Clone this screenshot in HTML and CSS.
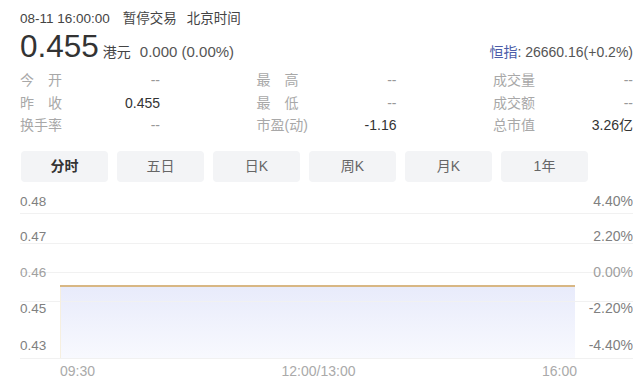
FILE: index.html
```html
<!DOCTYPE html>
<html>
<head>
  <meta charset="utf-8">
  <link rel="stylesheet" href="styles.css">
</head>
<body>
<div class="quote">
  <div class="time">08-11 16:00:00<span class="state">暂停交易</span><span class="zone">北京时间</span></div>

  <div class="price-row">
    <div class="price">
      <span class="last">0.455</span>
      <span class="cur">港元</span>
      <span class="chg">0.000 (0.00%)</span>
    </div>
    <div class="index"><span class="index-name">恒指</span>: 26660.16(+0.2%)</div>
  </div>

  <div class="stats">
    <div class="stat"><span class="label spread">今 开</span><span class="value dim">--</span></div>
    <div class="stat"><span class="label spread">最 高</span><span class="value dim">--</span></div>
    <div class="stat"><span class="label">成交量</span><span class="value dim">--</span></div>
    <div class="stat"><span class="label spread">昨 收</span><span class="value">0.455</span></div>
    <div class="stat"><span class="label spread">最 低</span><span class="value dim">--</span></div>
    <div class="stat"><span class="label">成交额</span><span class="value dim">--</span></div>
    <div class="stat"><span class="label">换手率</span><span class="value dim">--</span></div>
    <div class="stat"><span class="label">市盈(动)</span><span class="value">-1.16</span></div>
    <div class="stat"><span class="label">总市值</span><span class="value">3.26亿</span></div>
  </div>

  <div class="tabs">
    <div class="tab active">分时</div>
    <div class="tab">五日</div>
    <div class="tab">日K</div>
    <div class="tab">周K</div>
    <div class="tab">月K</div>
    <div class="tab">1年</div>
  </div>

  <!-- 分时图 -->
  <svg class="chart" width="613" height="199" viewBox="0 0 613 199">
    <defs>
      <linearGradient id="area" x1="0" y1="0" x2="0" y2="1">
        <stop offset="0" stop-color="#e8ebfb"/>
        <stop offset="1" stop-color="#f8f9fe"/>
      </linearGradient>
    </defs>
    <rect x="40" y="105" width="515" height="71" fill="url(#area)"/>
    <line class="grid" x1="0" y1="31.5" x2="613" y2="31.5"/>
    <line class="grid" x1="0" y1="61.5" x2="613" y2="61.5"/>
    <line class="grid" x1="0" y1="90.5" x2="613" y2="90.5"/>
    <line class="grid" x1="0" y1="119.5" x2="613" y2="119.5"/>
    <line class="grid" x1="0" y1="176.5" x2="613" y2="176.5"/>
    <line x1="40.5" y1="105" x2="40.5" y2="176" stroke="#f6efdf" stroke-width="1"/>
    <line x1="40" y1="104" x2="555" y2="104" stroke="#d8b784" stroke-width="2"/>

    <text class="axis" x="0" y="23.5">0.48</text>
    <text class="axis" x="0" y="58.5">0.47</text>
    <text class="axis faded" x="0" y="94.5">0.46</text>
    <text class="axis" x="0" y="130.5">0.45</text>
    <text class="axis" x="0" y="167.5">0.43</text>

    <text class="axis right" x="613" y="23.5">4.40%</text>
    <text class="axis right" x="613" y="58.5">2.20%</text>
    <text class="axis right faded" x="613" y="94.5">0.00%</text>
    <text class="axis right" x="613" y="130.5">-2.20%</text>
    <text class="axis right" x="613" y="167.5">-4.40%</text>

    <text class="time-axis" x="40" y="194">09:30</text>
    <text class="time-axis" x="298.5" y="194" text-anchor="middle">12:00/13:00</text>
    <text class="time-axis" x="557" y="194" text-anchor="end">16:00</text>
  </svg>
</div>
</body>
</html>
```

FILE: styles.css
```css
body {
  margin: 0;
  background-color: #ffffff;
  font-family: "Liberation Sans", "Noto Sans CJK SC", sans-serif;
  color: #333333;
}

.quote {
  width: 613px;
  padding: 10px 6px 0 20px;
}

.time {
  font-size: 13.5px;
  line-height: 18px;
  color: #444444;
}

.time .state {
  margin-left: 13px;
}

.time .zone {
  margin-left: 10px;
}

.price-row {
  display: flex;
  justify-content: space-between;
  align-items: baseline;
  height: 35px;
}

.price {
  display: flex;
  align-items: baseline;
}

.last {
  font-size: 31.5px;
  color: #333333;
}

.cur {
  font-size: 14px;
  margin-left: 4px;
  color: #444444;
}

.chg {
  font-size: 15px;
  margin-left: 9px;
  color: #555555;
}

.index {
  font-size: 14px;
  color: #555555;
}

.index-name {
  color: #4b5ca8;
}

.stats {
  display: grid;
  grid-template-columns: repeat(3, 140px);
  column-gap: 96.5px;
  margin-top: 6px;
}

.stat {
  display: flex;
  justify-content: space-between;
  height: 22.5px;
  line-height: 22px;
  font-size: 14px;
}

.label {
  color: #a8a8a8;
}

.label.spread {
  width: 42px;
  text-align: justify;
  text-align-last: justify;
}

.value {
  color: #333333;
}

.value.dim {
  color: #999999;
}

.tabs {
  display: flex;
  gap: 9px;
  margin-top: 14px;
  padding-left: 1px;
}

.tab {
  width: 87px;
  height: 31px;
  line-height: 31px;
  text-align: center;
  background-color: #f3f4f6;
  border-radius: 4px;
  font-size: 14px;
  color: #666666;
}

.tab.active {
  font-weight: bold;
  color: #333333;
}

.chart {
  display: block;
}

.chart .grid {
  stroke: #f1f1f1;
  stroke-width: 1;
}

.chart .axis {
  font-family: "Liberation Sans", sans-serif;
  font-size: 13.5px;
  fill: #808080;
}

.chart .axis.right {
  font-size: 14px;
  text-anchor: end;
}

.chart .axis.faded {
  fill: #a0a0a0;
}

.chart .time-axis {
  font-family: "Liberation Sans", sans-serif;
  font-size: 14px;
  fill: #aaaaaa;
}
```
